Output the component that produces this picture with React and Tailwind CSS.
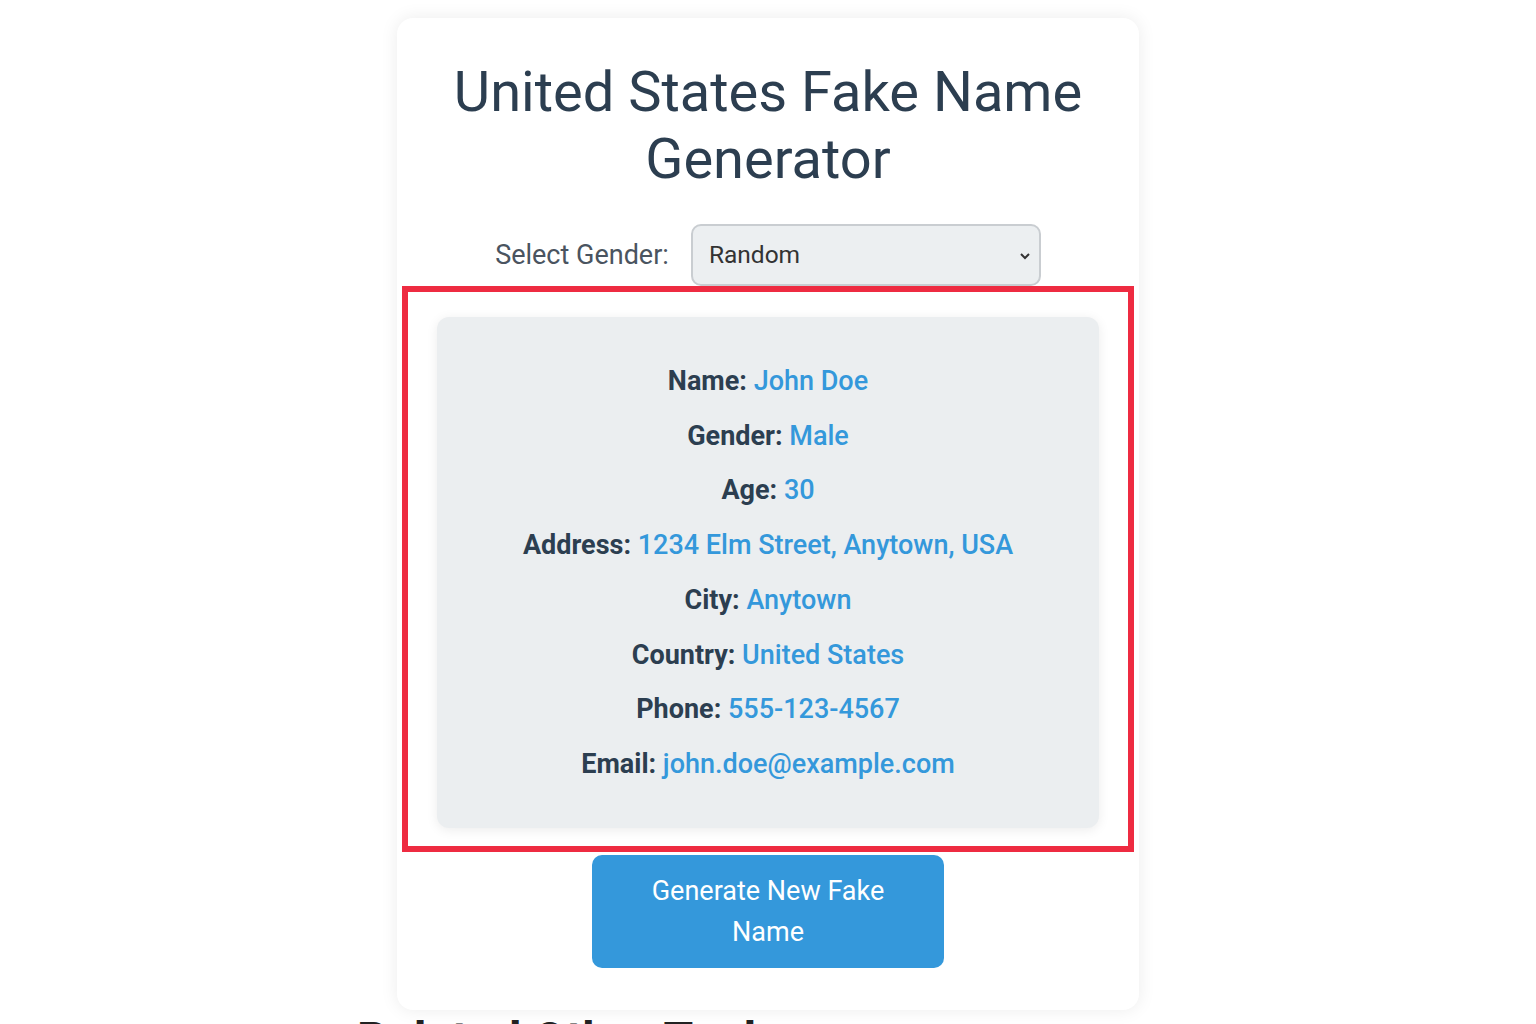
import { useState } from 'react';

const person = [
    ['Name', 'John Doe'],
    ['Gender', 'Male'],
    ['Age', '30'],
    ['Address', '1234 Elm Street, Anytown, USA'],
    ['City', 'Anytown'],
    ['Country', 'United States'],
    ['Phone', '555-123-4567'],
    ['Email', 'john.doe@example.com'],
];

export default function App() {
    const [gender, setGender] = useState('random');

    return (
        <div className="h-[1024px] overflow-hidden bg-white font-['Roboto',sans-serif] flex flex-col items-center">
            <div className="mt-[18px] w-[742px] rounded-[16px] bg-white shadow-[0_0_18px_rgba(0,0,0,0.08)] px-[5px] pt-[41px] pb-[42px] flex flex-col items-center">
                <h1 className="text-[56px] leading-[67px] text-[#2c3e50] text-center font-normal">
                    United States Fake Name Generator
                </h1>

                <div className="mt-[31px] flex items-center gap-[22px]">
                    <label htmlFor="gender" className="text-[27px] text-[#4a5460]">Select Gender:</label>
                    <div className="relative w-[350px]">
                        <select
                            id="gender"
                            value={gender}
                            onChange={(e) => setGender(e.target.value)}
                            className="w-full h-[62px] appearance-none rounded-[10px] border-2 border-[#c9cdd1] bg-[#eceff1] pl-[16px] text-[24.5px] text-[#333]"
                        >
                            <option value="random">Random</option>
                            <option value="male">Male</option>
                            <option value="female">Female</option>
                        </select>
                        <svg className="absolute right-[10px] top-[27px] w-[12px] h-[10px] pointer-events-none" viewBox="0 0 12 10" fill="none" stroke="#333" strokeWidth="2">
                            <path d="M2 3l4 4 4-4" />
                        </svg>
                    </div>
                </div>

                <div className="w-full border-[6px] border-[#ee2b41] px-[29px] pt-[25px] pb-[18px]">
                    <div className="rounded-[12px] bg-[#ebeef0] shadow-[0_2px_12px_rgba(0,0,0,0.08)] pt-[37px] pb-[36px] text-center">
                        {person.map(([label, value]) => (
                            <p key={label} className="text-[27px] leading-[54.7px]">
                                <span className="font-bold text-[#2c3e50]">{label}:</span>{' '}
                                <span className="font-medium text-[#3498db]">{value}</span>
                            </p>
                        ))}
                    </div>
                </div>

                <button className="mt-[3px] w-[352px] rounded-[10px] bg-[#3498db] px-[50px] pt-[16px] pb-[15px] text-[27px] leading-[41px] text-white">
                    Generate New Fake Name
                </button>
            </div>

            <h2 className="mt-[6px] w-[822px] text-[48px] leading-none font-bold text-[#222]">
                Related Other Tools
            </h2>
        </div>
    );
}
